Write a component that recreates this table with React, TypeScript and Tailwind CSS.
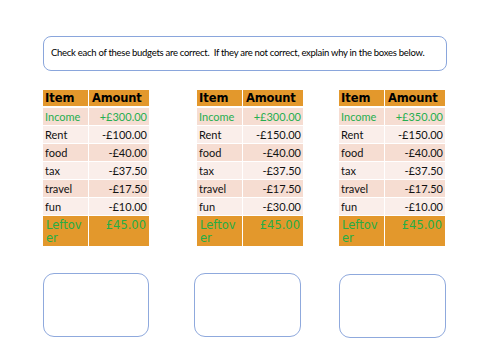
import React from "react";

type Row = { item: string; amount: string; income?: boolean };

const budgets: Row[][] = [
  [
    { item: "Income", amount: "+£300.00", income: true },
    { item: "Rent", amount: "-£100.00" },
    { item: "food", amount: "-£40.00" },
    { item: "tax", amount: "-£37.50" },
    { item: "travel", amount: "-£17.50" },
    { item: "fun", amount: "-£10.00" },
  ],
  [
    { item: "Income", amount: "+£300.00", income: true },
    { item: "Rent", amount: "-£150.00" },
    { item: "food", amount: "-£40.00" },
    { item: "tax", amount: "-£37.50" },
    { item: "travel", amount: "-£17.50" },
    { item: "fun", amount: "-£30.00" },
  ],
  [
    { item: "Income", amount: "+£350.00", income: true },
    { item: "Rent", amount: "-£150.00" },
    { item: "food", amount: "-£40.00" },
    { item: "tax", amount: "-£37.50" },
    { item: "travel", amount: "-£17.50" },
    { item: "fun", amount: "-£10.00" },
  ],
];

const BudgetTable = ({ rows, className }: { rows: Row[]; className?: string }) => {
  return (
    <div className={`w-[106px] flex flex-col ${className ?? ""}`}>
      <div className="grid grid-cols-[45px_1fr] gap-x-px h-[16px] font-['DejaVu_Sans',sans-serif] font-bold text-[11.5px] leading-[16px] text-black">
        <div className="bg-[#E3982C] pl-[2px]">Item</div>
        <div className="bg-[#E3982C] pl-[3px] tracking-[-0.2px]">Amount</div>
      </div>
      <div className="flex flex-col gap-y-px mt-[2px]">
        {rows.map((r, i) => (
          <div
            key={r.item}
            className={`grid grid-cols-[45px_1fr] gap-x-px h-[17px] font-['Lato',sans-serif] text-[11px] leading-[17px] ${
              r.income ? "text-[#26AE50]" : "text-[#111]"
            }`}
          >
            <div className={`${i % 2 === 0 ? "bg-[#F6DDD2]" : "bg-[#FAEEEA]"} pl-[2px]`}>{r.item}</div>
            <div className={`${i % 2 === 0 ? "bg-[#F6DDD2]" : "bg-[#FAEEEA]"} text-right pr-[2px]`}>{r.amount}</div>
          </div>
        ))}
        <div className="grid grid-cols-[45px_1fr] gap-x-px h-[30px] font-['DejaVu_Sans',sans-serif] text-[11.5px] leading-[13px] text-[#26AE46]">
          <div className="bg-[#E3982C] pl-[3px] pt-[3px]">
            Leftov
            <br />
            er
          </div>
          <div className="bg-[#E3982C] text-right pr-[3px] pt-[3px]">£45.00</div>
        </div>
      </div>
    </div>
  );
};

export default function App() {
  return (
    <div className="w-[500px] h-[353px] bg-white relative overflow-hidden">
      <div className="pt-[36px] pl-[43px]">
        <div className="w-[404px] h-[35px] border border-[#8AA6DC] rounded-[8px] flex items-center pl-[7px] font-['Lato',sans-serif] text-[9.5px] tracking-[-0.28px] text-black whitespace-pre">
          Check each of these budgets are correct.  If they are not correct, explain why in the boxes below.
        </div>
      </div>
      <div className="flex mt-[19px] pl-[43px]">
        <BudgetTable rows={budgets[0]} />
        <BudgetTable rows={budgets[1]} className="ml-[48px]" />
        <BudgetTable rows={budgets[2]} className="ml-[36px]" />
      </div>
      <div className="flex mt-[27px] pl-[43px]">
        <div className="w-[106px] h-[64px] border border-[#8FA9DD] rounded-[11px]" />
        <div className="w-[107px] h-[64px] border border-[#8FA9DD] rounded-[11px] ml-[45px]" />
        <div className="w-[107px] h-[64px] border border-[#8FA9DD] rounded-[11px] ml-[38px] mt-[1px]" />
      </div>
    </div>
  );
}
